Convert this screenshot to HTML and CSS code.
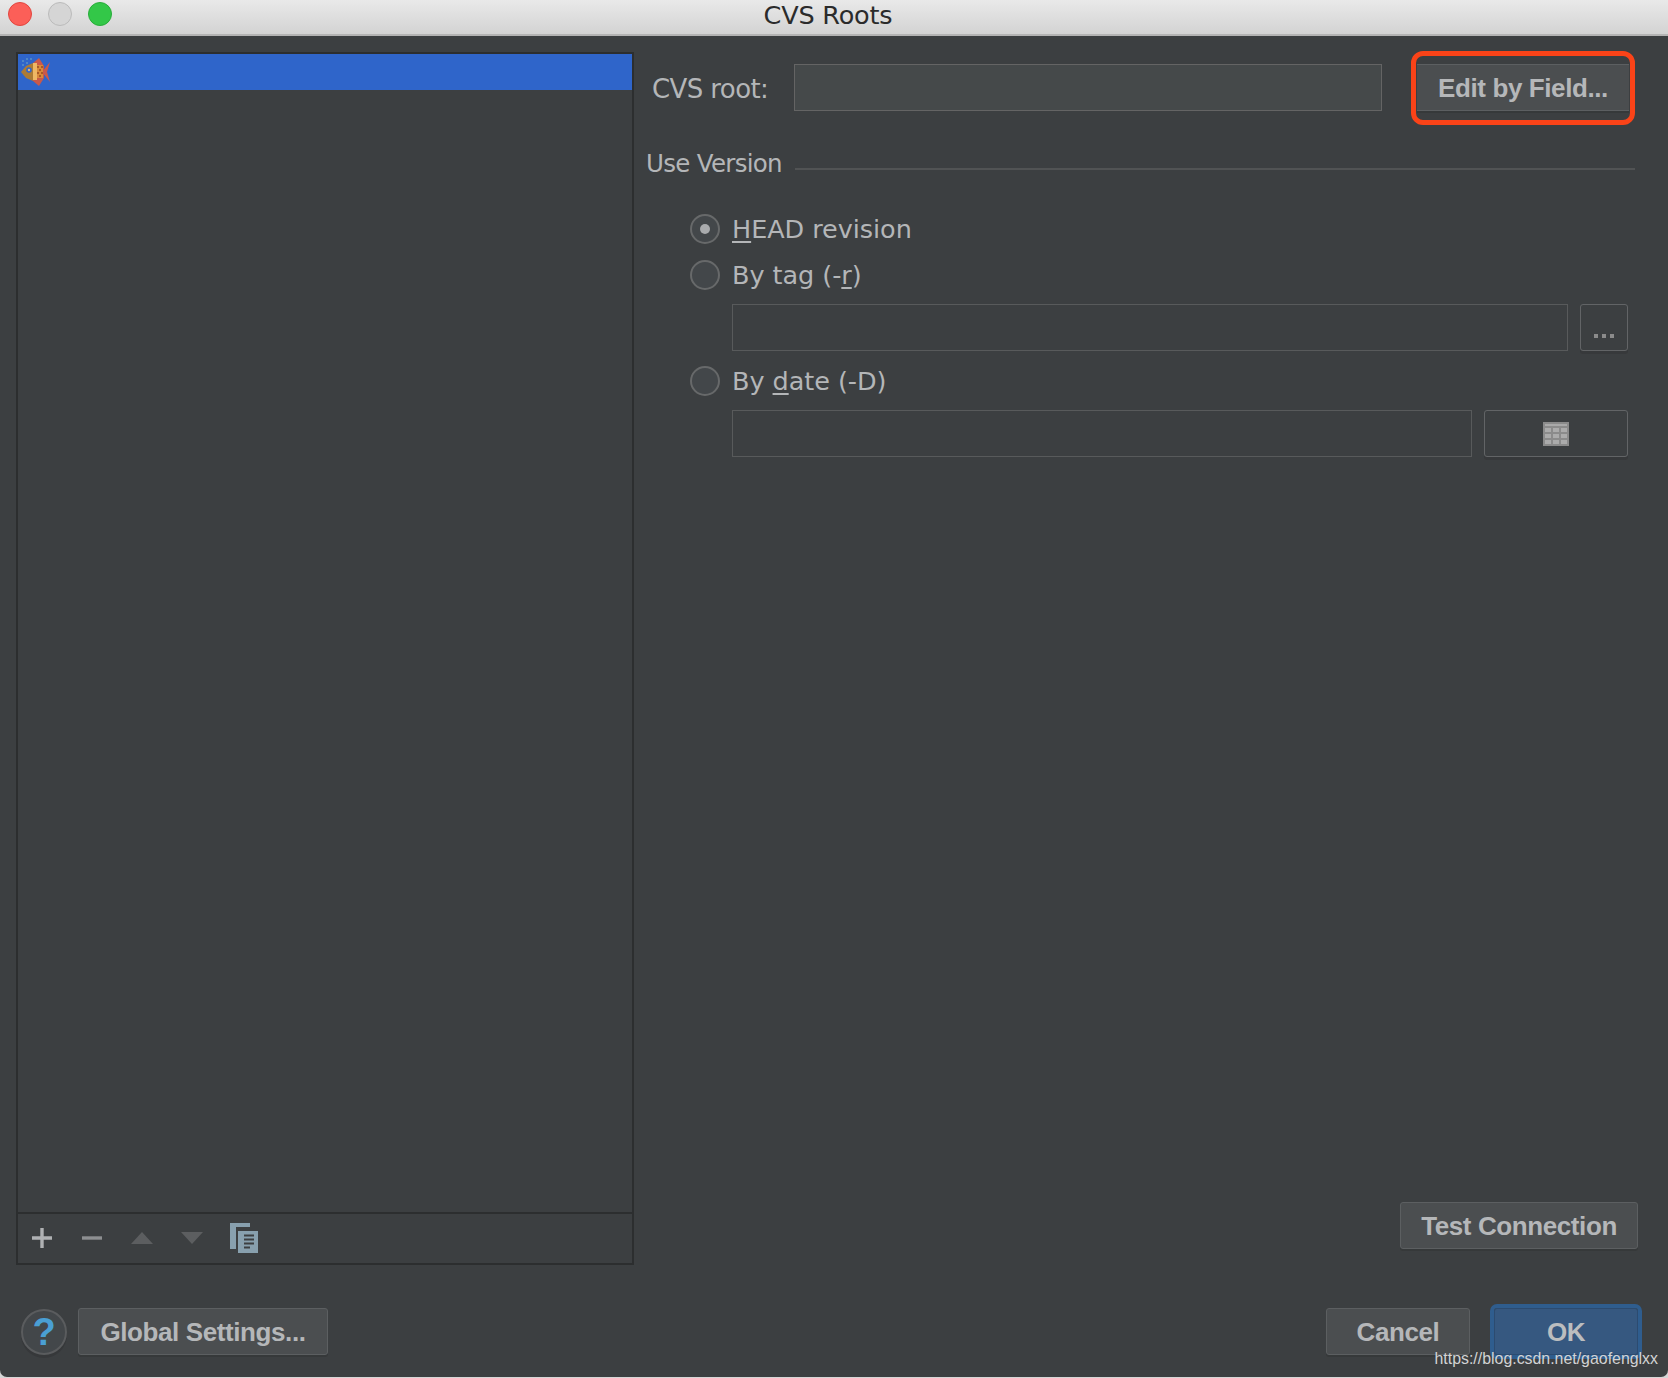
FILE: index.html
```html
<!DOCTYPE html>
<html lang="en">
<head>
<meta charset="utf-8">
<title>CVS Roots</title>
<link rel="stylesheet" href="styles.css">
</head>
<body>
<div class="window">
  <header class="titlebar">
    <div class="lights">
      <span class="light red"></span>
      <span class="light grey"></span>
      <span class="light green"></span>
    </div>
    <div class="title">CVS Roots</div>
  </header>
  <main class="body">
    <section class="list-panel">
      <div class="list-area">
        <div class="list-row">
          <svg class="fish" width="30" height="28" viewBox="0 0 30 28">
            <g fill="#4f86c6"><rect x="2" y="2" width="2" height="2"/><rect x="6" y="0" width="2" height="2"/><rect x="10" y="0" width="2" height="2"/><rect x="6" y="4" width="2" height="2"/><rect x="2" y="6" width="2" height="2"/></g>
            <path d="M13 5L19 0l5 8v12l-5 8-6-5z" fill="#c9594a"/>
            <path d="M22 14L30 4l-3 10 3 10z" fill="#c9594a"/>
            <path d="M1 14l5-6 7-3v18l-7-3z" fill="#ab7b35"/>
            <rect x="13" y="5" width="4" height="17" fill="#eeb765"/>
            <rect x="17" y="7" width="6" height="13" fill="#d98a3a"/>
            <g fill="#a85a28"><rect x="17" y="8" width="2" height="2"/><rect x="21" y="8" width="2" height="2"/><rect x="19" y="11" width="2" height="2"/><rect x="17" y="14" width="2" height="2"/><rect x="21" y="14" width="2" height="2"/><rect x="19" y="17" width="2" height="2"/></g>
            <circle cx="9" cy="12" r="2.800" fill="#2f65cd"/><circle cx="9" cy="12" r="1.200" fill="#e2b878"/>
          </svg>
        </div>
      </div>
      <div class="list-toolbar">
        <svg class="tool" width="24" height="24" viewBox="0 0 24 24"><path d="M2 12h20M12 2v20" stroke="#afb1b3" stroke-width="3.400"/></svg>
        <svg class="tool" width="24" height="24" viewBox="0 0 24 24"><path d="M2 12h20" stroke="#8d8f91" stroke-width="3.400"/></svg>
        <svg class="tool" width="24" height="24" viewBox="0 0 24 24"><path d="M1 18L12 6l11 12z" fill="#5c5e60"/></svg>
        <svg class="tool" width="24" height="24" viewBox="0 0 24 24"><path d="M1 6h22L12 18z" fill="#5c5e60"/></svg>
        <svg class="copy" width="28" height="30" viewBox="0 0 28 30">
          <path d="M0 0h20v4H6v22H0z" fill="#88a0ae"/>
          <rect x="8" y="8" width="20" height="22" fill="#88a0ae"/>
          <path d="M14 12.500h10M14 16.500h10M14 20.500h10M14 24.500h6" stroke="#3c3f41" stroke-width="2"/>
        </svg>
      </div>
    </section>
    <section class="settings">
      <div class="root-row">
        <label class="root-label">CVS root:</label>
        <div class="field root-field"></div>
        <button class="btn edit-btn">Edit by Field...<span class="highlight"></span></button>
      </div>
      <div class="version-head">
        <span class="version-title">Use Version</span>
        <span class="version-line"></span>
      </div>
      <div class="options">
        <div class="option">
          <span class="radio checked"></span>
          <span class="opt-text"><u>H</u>EAD revision</span>
        </div>
        <div class="option">
          <span class="radio"></span>
          <span class="opt-text">By tag (-<u>r</u>)</span>
        </div>
        <div class="input-row">
          <div class="field flat grow"></div>
          <button class="ghost dots-btn"><span class="dots"><i></i><i></i><i></i></span></button>
        </div>
        <div class="option">
          <span class="radio"></span>
          <span class="opt-text">By <u>d</u>ate (-D)</span>
        </div>
        <div class="input-row">
          <div class="field flat grow"></div>
          <button class="ghost cal-btn">
            <svg width="26" height="24" viewBox="0 0 26 24">
              <rect width="26" height="24" fill="#8b8b8b"/>
              <rect x="2" y="2" width="22" height="2" fill="#a9a9a9"/>
              <g fill="#ababab">
                <rect x="2" y="6" width="6" height="4"/><rect x="10" y="6" width="6" height="4"/><rect x="18" y="6" width="6" height="4"/>
                <rect x="2" y="12" width="6" height="4"/><rect x="10" y="12" width="6" height="4"/><rect x="18" y="12" width="6" height="4"/>
                <rect x="2" y="18" width="6" height="4"/><rect x="10" y="18" width="6" height="4"/><rect x="18" y="18" width="6" height="4"/>
              </g>
            </svg>
          </button>
        </div>
      </div>
      <div class="test-row">
        <button class="btn test-btn">Test Connection</button>
      </div>
    </section>
  </main>
  <footer class="footer">
    <button class="help">?</button>
    <button class="btn global-btn">Global Settings...</button>
    <span class="spring"></span>
    <button class="btn cancel-btn">Cancel</button>
    <button class="btn ok-btn">OK</button>
  </footer>
  <div class="watermark">https://blog.csdn.net/gaofenglxx</div>
</div>
</body>
</html>
```
FILE: styles.css
```css
* { box-sizing: border-box; }
html, body { margin: 0; padding: 0; }
body { width: 1668px; height: 1378px; overflow: hidden; background: #d6d6d6; font-family: "Liberation Sans", Arial, sans-serif; }
.window { position: relative; width: 1668px; height: 1377px; display: flex; flex-direction: column; background: #3c3f41; border-radius: 0 0 7px 7px; }

.titlebar { position: relative; height: 36px; flex: none; background: linear-gradient(#e9e9e9, #d3d3d3); border-bottom: 2px solid #b4b4b4; display: flex; align-items: center; justify-content: center; }
.lights { position: absolute; left: 8px; top: 2px; display: flex; gap: 16px; }
.light { width: 24px; height: 24px; border-radius: 50%; }
.red { background: #fc5f58; border: 1px solid #e2463f; }
.grey { background: #d5d5d5; border: 1px solid #bbb; }
.green { background: #33c748; border: 1px solid #28ad3a; }
.title { font: 25.500px/30px "DejaVu Sans", sans-serif; letter-spacing: -0.2px; color: #2b2b2b; margin: -5px 12px 0 0; }

.body { display: flex; height: 1229px; flex: none; }
.list-panel { width: 618px; margin: 16px 0 0 16px; height: 1213px; border: 2px solid #2c2e2f; display: flex; flex-direction: column; flex: none; }
.list-area { flex: 1; }
.list-row { height: 36px; background: #2f65ca; display: flex; align-items: center; padding-left: 2px; }
.list-toolbar { height: 51px; border-top: 2px solid #2c2e2f; display: flex; align-items: center; gap: 26px; padding: 0 0 2px 12px; flex: none; }
.tool { flex: none; }
.copy { margin-left: 0; }

.settings { flex: 1; display: flex; flex-direction: column; padding: 16px 33px 0 12px; min-width: 0; position: relative; }
.root-row { display: flex; align-items: center; height: 47px; margin-top: 12px; padding-left: 6px; }
.root-label { width: 142px; color: #b4b6b8; font-size: 26px; font-family: "DejaVu Sans", sans-serif; letter-spacing: -0.6px; padding-top: 2px; }
.field { border: 1px solid #5d5f60; background: transparent; height: 47px; }
.root-field { width: 588px; background: #45494a; border-color: #646464; }
.btn { font-family: "Liberation Sans", Arial, sans-serif; font-weight: bold; font-size: 26px; letter-spacing: -0.4px; color: #b5b7b9; background: #4b4e50; border: 1px solid #5c5f61; border-radius: 3px; padding: 2px 0 0; height: 47px; box-shadow: 0 2px 0 #36393a; }
.edit-btn { position: relative; width: 212px; margin-left: 35px; border-radius: 0; border-left: 0; border-right: 0; }
.highlight { position: absolute; left: -6px; top: -14px; width: 224px; height: 74px; border: 5px solid #fa4318; border-radius: 12px; }

.version-head { display: flex; align-items: center; margin-top: 38px; height: 28px; }
.version-title { color: #b4b6b8; font-size: 24.500px; font-family: "DejaVu Sans", sans-serif; letter-spacing: -0.7px; width: 149px; flex: none; }
.version-line { height: 2px; flex: 1; background: #515354; margin-top: 11px; }

.options { padding: 0 7px 0 44px; margin-top: 29px; }
.option { display: flex; align-items: center; gap: 12px; height: 46px; }
.radio { width: 30px; height: 30px; border-radius: 50%; border: 2px solid #67696a; background: #43474a; display: flex; align-items: center; justify-content: center; flex: none; }
.radio.checked::after { content: ""; width: 10px; height: 10px; border-radius: 50%; background: #a9abad; }
.opt-text { color: #b4b6b8; font-size: 25.500px; font-family: "DejaVu Sans", sans-serif; letter-spacing: -0.05px; }
.opt-text u { text-underline-offset: 3px; }
.input-row { display: flex; gap: 12px; padding-left: 42px; margin: 6px 0 7px; }
.flat { border-color: #585a5b; }
.grow { flex: 1; min-width: 0; }
.ghost { height: 47px; background: transparent; border: 1px solid #626466; border-radius: 3px; box-shadow: 0 3px 0 #37393b; padding: 0; display: flex; align-items: center; justify-content: center; flex: none; }
.dots-btn { width: 48px; padding-top: 16px; }
.dots { display: flex; gap: 4px; }
.dots i { width: 4px; height: 4px; background: #8b8b8b; }
.cal-btn { width: 144px; }

.test-row { margin-top: auto; display: flex; justify-content: flex-end; margin-bottom: 16px; margin-right: -3px; }
.test-btn { width: 238px; }

.footer { display: flex; align-items: center; height: 47px; flex: none; margin-top: 43px; padding: 0 30px 0 21px; }
.help { width: 46px; height: 46px; border-radius: 50%; border: 2px solid #5a5c5e; background: #43474a; color: #4a9fd4; font: bold 38px "Liberation Sans", sans-serif; padding: 0; box-shadow: 0 3px 0 #36383a; }
.global-btn { width: 250px; margin-left: 11px; }
.spring { flex: 1; }
.cancel-btn { width: 144px; }
.ok-btn { width: 144px; margin-left: 24px; background: #365880; border: 1px solid #2c4b70; outline: 4px solid #2f5d8e; color: #bbbdbf; box-shadow: none; }

.watermark { position: absolute; right: 10px; top: 1349px; font: 15.900px/20px "Liberation Sans", sans-serif; color: #d2d3d4; }
```
